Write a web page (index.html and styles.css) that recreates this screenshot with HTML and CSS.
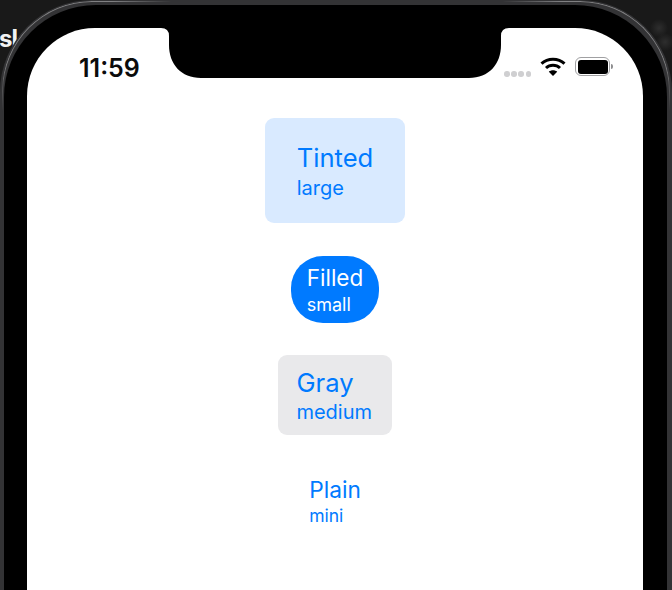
FILE: index.html
```html
<!DOCTYPE html>
<html lang="en">
<head>
<meta charset="utf-8">
<title>Button styles</title>
<link rel="stylesheet" href="styles.css">
</head>
<body>
<div class="backdrop-text">sl</div>
<div class="device">
  <div class="bezel">
    <div class="screen">
      <div class="status">
        <span class="time">11:59</span>
        <div class="indicators">
          <div class="signal"><i></i><i></i><i></i><i></i></div>
          <svg class="wifi" width="26" height="19" viewBox="0 0 26 19" aria-hidden="true">
            <path d="M1.5 6.7C7.8 .7 18.2 .7 24.5 6.7" class="arc"/>
            <path d="M6 11C9.9 7.4 16.1 7.4 20 11" class="arc"/>
            <path d="M13 19L8.8 14.8C11 12.8 15 12.8 17.2 14.8Z" class="dot"/>
          </svg>
          <div class="battery"><div class="level"></div></div>
          <div class="nub"></div>
        </div>
      </div>
      <div class="stack">
        <button class="btn tinted"><span class="title">Tinted</span><span class="sub">large</span></button>
        <button class="btn filled"><span class="title">Filled</span><span class="sub">small</span></button>
        <button class="btn gray"><span class="title">Gray</span><span class="sub">medium</span></button>
        <button class="btn plain"><span class="title">Plain</span><span class="sub">mini</span></button>
      </div>
    </div>
    <svg class="notch" width="348" height="50" viewBox="0 0 348 50" aria-hidden="true">
      <path d="M0 0Q8 0 8 8V17C8 36 20 50 40 50H308C328 50 340 36 340 17V8Q340 0 348 0Z"/>
    </svg>
  </div>
</div>
</body>
</html>
```
FILE: styles.css
```css
* { box-sizing: border-box; }
html, body { margin: 0; padding: 0; }
body {
  width: 672px;
  height: 590px;
  overflow: hidden;
  position: relative;
  font-family: Inter, "Liberation Sans", sans-serif;
  background:
    radial-gradient(circle at 659px 28px, #2e2e2e 0, transparent 9px),
    radial-gradient(circle at 665px 42px, #2e2e2e 0, transparent 9px),
    #191919;
}
.backdrop-text {
  position: absolute;
  left: -1px;
  top: 24px;
  font-size: 24px;
  font-weight: 700;
  letter-spacing: -1px;
  color: #f2f2f2;
}
.device {
  position: relative;
  width: 672px;
  height: 590px;
  border-radius: 92px 92px 0 0;
  background: #333335;
  padding: 5px 5px 0 4px;
}
.device::before {
  content: "";
  position: absolute;
  left: 2px;
  right: 2px;
  top: 1px;
  height: 112px;
  border: 1px solid #808082;
  border-bottom: 0;
  border-radius: 90px 90px 0 0;
  -webkit-mask-image: linear-gradient(to right, #000 110px, transparent 170px, transparent 500px, #000 560px), linear-gradient(to bottom, #000 60px, transparent 110px);
  mask-image: linear-gradient(to right, #000 110px, transparent 170px, transparent 500px, #000 560px), linear-gradient(to bottom, #000 60px, transparent 110px);
  mask-composite: intersect;
}
.bezel {
  position: relative;
  height: 100%;
  background: #000;
  border-radius: 92px 92px 0 0;
  padding: 23px 24px 0 23px;
}
.screen {
  height: 100%;
  background: #fff;
  border-radius: 68px 68px 0 0;
  display: flex;
  flex-direction: column;
}
.notch {
  position: absolute;
  left: 157px;
  top: 23px;
  fill: #000;
}
.status {
  height: 90px;
  padding: 25px 30px 0 52px;
  display: flex;
  justify-content: space-between;
  align-items: flex-start;
}
.time {
  font-size: 25px;
  line-height: 30px;
  font-weight: 600;
  color: #0b0b0b;
}
.indicators {
  display: flex;
  align-items: flex-start;
}
.signal {
  display: flex;
  gap: 1.67px;
  margin-top: 18px;
  margin-right: 9px;
}
.signal i {
  width: 5.5px;
  height: 5.5px;
  border-radius: 50%;
  background: #cfcfd1;
}
.wifi { margin-top: 4px; margin-right: 9px; }
.arc { fill: none; stroke: #000; stroke-width: 3; }
.dot { fill: #000; }
.battery {
  width: 35px;
  height: 19px;
  margin-top: 4px;
  padding: 1.5px;
  border: 1.5px solid #a0a0a2;
  border-radius: 6px;
}
.level {
  height: 100%;
  background: #000;
  border-radius: 3px;
}
.nub {
  width: 2px;
  height: 5px;
  margin: 11px 0 0 1px;
  background: #8e8e90;
  border-radius: 0 2px 2px 0;
}
.stack {
  display: flex;
  flex-direction: column;
  align-items: center;
  gap: 32px;
}
.btn {
  display: flex;
  flex-direction: column;
  align-items: flex-start;
  border: 0;
  margin: 0;
  font-family: inherit;
  color: #007aff;
  text-align: left;
}
.title { font-size: 25.6px; line-height: 32px; }
.sub { font-size: 20px; line-height: 25px; }
.tinted {
  background: #d9eaff;
  border-radius: 9px;
  padding: 24px 32px 22px;
}
.tinted .sub { margin-top: 2px; }
.filled {
  background: #007aff;
  color: #fff;
  border-radius: 32px;
  margin-top: 1px;
  padding: 7px 16px 7px;
}
.filled .title { font-size: 22.5px; line-height: 29px; }
.filled .sub { font-size: 18px; line-height: 23px; margin-top: 1px; }
.gray {
  background: #e9e9eb;
  border-radius: 9px;
  padding: 12px 20px 10px 18.5px;
}
.gray .sub { margin-top: 1px; }
.plain {
  background: transparent;
  padding: 8px 0 0;
}
.plain .title { font-size: 22.7px; line-height: 30px; }
.plain .sub { font-size: 17.5px; line-height: 22px; }
```
